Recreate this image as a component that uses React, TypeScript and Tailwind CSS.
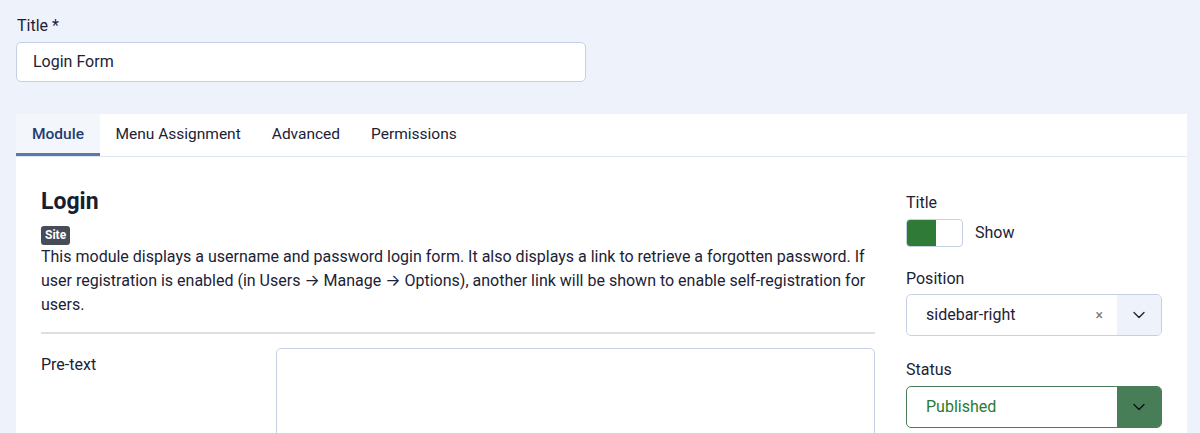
import { ChevronDown } from "lucide-react";

const tabs = ["Module", "Menu Assignment", "Advanced", "Permissions"];

const Arrow = () => <span className="font-['Inter',sans-serif] leading-none">→</span>;

export default function App() {
  return (
    <div className="min-h-screen bg-[#eef2fa] font-['Roboto',sans-serif] text-[#1c2236] overflow-hidden">
      <div className="px-4 pt-[15px]">
        {/* Title field */}
        <label className="block text-[16px] leading-[22px] ml-[1px] mb-[5px]">Title *</label>
        <div className="w-[570px] h-[40px] bg-white border border-[#c5d1e3] rounded-[5px] flex items-center px-4 text-[16px]">
          Login Form
        </div>

        {/* Tabs */}
        <div className="mt-[32px] w-[1171px] bg-white">
          <div className="flex h-[43px] border-b border-[#e0e6ef]">
            {tabs.map((t, i) => (
              <div
                key={t}
                className={
                  i === 0
                    ? "px-[16px] flex items-center text-[15.5px] font-medium text-[#1f3d72] border-b-[3px] border-[#587aa6] bg-[#f3f6fb] pt-[2px]"
                    : "px-[15.5px] flex items-center text-[15.5px] text-[#1c2236]"
                }
              >
                {t}
              </div>
            ))}
          </div>

          {/* Panel */}
          <div className="flex px-[25px] pt-[30px] gap-[31px]">
            {/* Left */}
            <div className="w-[834px]">
              <h2 className="text-[23px] font-bold leading-[30px] text-[#171d33]">Login</h2>
              <span className="block w-fit mt-[9px] bg-[#474c59] text-white text-[12px] font-bold leading-[19px] px-[4px] rounded-[3px]">
                Site
              </span>
              <p className="text-[16px] leading-[24px] text-[#1c2236]">
                This module displays a username and password login form. It also displays a link to retrieve a forgotten password. If user registration is enabled (in Users <Arrow /> Manage <Arrow /> Options), another link will be shown to enable self-registration for users.
              </p>
              <div className="h-[2px] bg-[#dcdfe4] mt-[15px]" />
              <div className="flex mt-[14px]">
                <div className="w-[235px] pt-[5px] text-[16px]">Pre-text</div>
                <div className="flex-1 h-[120px] border border-[#c5d1e3] rounded-[5px]" />
              </div>
            </div>

            {/* Right */}
            <div className="w-[256px] pt-[5px]">
              <div className="text-[16px] leading-[22px]">Title</div>
              <div className="flex items-center mt-[5px]">
                <div className="w-[57px] h-[28px] border border-[#c5d1e3] rounded-[4px] flex overflow-hidden">
                  <div className="w-[29px] bg-[#2e7a36]" />
                </div>
                <span className="ml-[12px] text-[16px]">Show</span>
              </div>

              <div className="text-[16px] leading-[22px] mt-[21px]">Position</div>
              <div className="mt-[4px] h-[42px] border border-[#c5d1e3] rounded-[5px] flex overflow-hidden">
                <div className="flex-1 flex items-center pl-[19px] text-[16px]">sidebar-right</div>
                <span className="flex items-center pr-[14px] text-[#777] text-[14px]">×</span>
                <div className="w-[44px] bg-[#eef2fa] flex items-center justify-center">
                  <ChevronDown className="w-5 h-5" strokeWidth={1.6} />
                </div>
              </div>

              <div className="text-[16px] leading-[22px] mt-[23px]">Status</div>
              <div className="mt-[5px] h-[42px] border border-[#4a7d57] rounded-[5px] flex overflow-hidden">
                <div className="flex-1 flex items-center pl-[19px] text-[16px] text-[#2a7a2f]">Published</div>
                <div className="w-[44px] bg-[#477d57] flex items-center justify-center">
                  <ChevronDown className="w-5 h-5 text-[#111]" strokeWidth={1.6} />
                </div>
              </div>
            </div>
          </div>
        </div>
      </div>
    </div>
  );
}
